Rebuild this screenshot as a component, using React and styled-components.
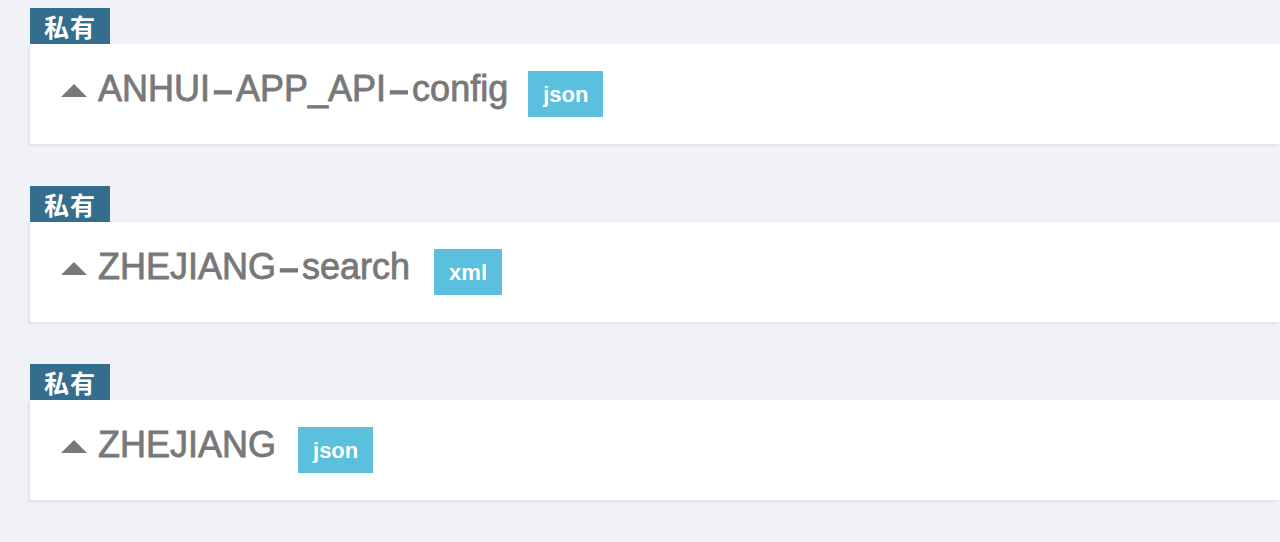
import React from "react";
import styled, { createGlobalStyle } from "styled-components";

const Global = createGlobalStyle`
  html, body { margin: 0; padding: 0; background: #f0f2f7; }
  body { font-family: "Liberation Sans", Arial, "Noto Sans CJK SC", sans-serif; }
`;

const Page = styled.div`
  display: flex;
  flex-direction: column;
  gap: 42px;
  padding: 8px 0 0 30px;
  min-height: 542px;
  box-sizing: border-box;
  overflow: hidden;
`;

const Block = styled.section`
  display: flex;
  flex-direction: column;
  align-items: flex-start;
`;

const Tag = styled.div`
  height: 36px;
  width: 80px;
  box-sizing: border-box;
  background: #346e8e;
  color: #fff;
  font-family: "Noto Sans CJK SC", "Liberation Sans", sans-serif;
  font-weight: 700;
  font-size: 25px;
  line-height: 36px;
  text-align: center;
  letter-spacing: 1px;
`;

const Card = styled.div`
  align-self: stretch;
  height: 100px;
  background: #fff;
  box-shadow: -2px 2px 2px rgba(30, 40, 70, 0.07);
  display: flex;
  align-items: center;
  padding-left: 31px;
`;

const Caret = styled.svg`
  width: 26px;
  height: 13px;
  margin-bottom: 7px;
  margin-right: 11px;
  flex: none;
`;

const Title = styled.h2`
  margin: 0 0 11px 0;
  font-family: "Liberation Sans", Arial, sans-serif;
  font-weight: 400;
  font-size: 36px;
  line-height: 36px;
  color: #787878;
  -webkit-text-stroke: 0.8px #787878;
  white-space: nowrap;
`;

const Dash = styled.span`
  display: inline-block;
  width: 26px;
  text-align: center;
  transform: scale(1.9, 1.15);
`;

const Badge = styled.span`
  margin-left: ${(p) => p.$gap}px;
  height: 46px;
  padding: 2px 15px 0;
  box-sizing: border-box;
  display: inline-flex;
  align-items: center;
  background: #5bc0de;
  color: #fff;
  font-family: "Liberation Sans", Arial, sans-serif;
  font-weight: 700;
  font-size: 22px;
`;

const items = [
  { name: "ANHUI-APP_API-config", type: "json", gap: 20 },
  { name: "ZHEJIANG-search", type: "xml", gap: 24 },
  { name: "ZHEJIANG", type: "json", gap: 22 },
];

function renderName(name) {
  const parts = name.split("-");
  return parts.map((p, i) => (
    <React.Fragment key={i}>
      {i > 0 && <Dash>-</Dash>}
      {p}
    </React.Fragment>
  ));
}

export default function App() {
  return (
    <>
      <Global />
      <Page>
        {items.map((it) => (
          <Block key={it.name}>
            <Tag>私有</Tag>
            <Card>
              <Caret viewBox="0 0 26 13">
                <polygon points="13,0 26,13 0,13" fill="#787878" />
              </Caret>
              <Title>{renderName(it.name)}</Title>
              <Badge $gap={it.gap}>{it.type}</Badge>
            </Card>
          </Block>
        ))}
      </Page>
    </>
  );
}
